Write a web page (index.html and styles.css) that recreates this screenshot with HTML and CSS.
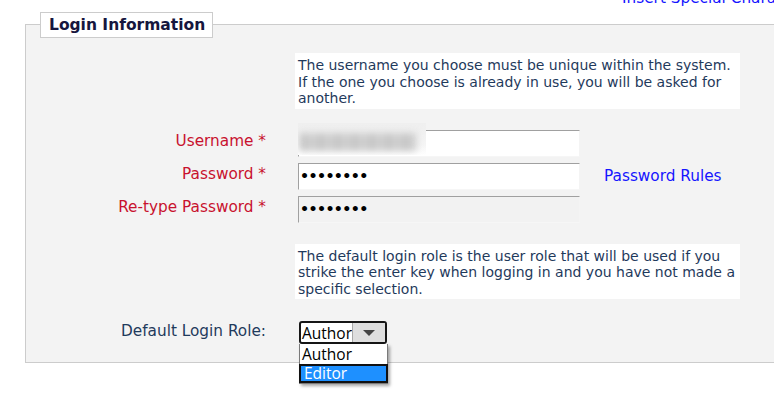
FILE: index.html
```html
<!DOCTYPE html>
<html lang="en">
<head>
<meta charset="utf-8">
<title>Login Information</title>
<link rel="stylesheet" href="styles.css">
</head>
<body>
<div class="topbar"><a class="toplink" href="#">Insert Special Characters</a></div>
<section class="login" aria-labelledby="login-title">
  <h2 class="legend" id="login-title">Login Information</h2>

  <div class="row row-info1">
    <div class="label"></div>
    <div class="info">The username you choose must be unique within the system. If the one you choose is already in use, you will be asked for another.</div>
  </div>

  <div class="row row-user">
    <div class="label req">Username <span class="star">*</span></div>
    <div class="field smudged">
      <input class="input" type="text" value="" aria-label="Username">
      <div class="smudge"><span class="ink"></span></div>
    </div>
  </div>

  <div class="row row-pass">
    <div class="label req">Password <span class="star">*</span></div>
    <div class="field"><input class="input pw" type="password" value="abcdefgh" aria-label="Password"></div>
    <a class="aside" href="#">Password Rules</a>
  </div>

  <div class="row row-pass">
    <div class="label req">Re-type Password <span class="star">*</span></div>
    <div class="field"><input class="input pw readonly" type="password" value="abcdefgh" readonly aria-label="Re-type Password"></div>
  </div>

  <div class="row row-info2">
    <div class="label"></div>
    <div class="info">The default login role is the user role that will be used if you strike the enter key when logging in and you have not made a specific selection.</div>
  </div>

  <div class="row row-role">
    <div class="label role">Default Login Role:</div>
    <div class="field">
      <div class="selectwrap">
        <div class="select">
          <span class="select-value">Author</span>
          <span class="select-btn"><svg width="12" height="6" viewBox="0 0 12 6"><path d="M0 0h12L6 6z" fill="#444"/></svg></span>
        </div>
        <ul class="listbox">
          <li class="opt">Author</li>
          <li class="opt selected">Editor</li>
        </ul>
      </div>
    </div>
  </div>
</section>
<div class="pagefoot"></div>
</body>
</html>
```
FILE: styles.css
```css
html {
  overflow: hidden;
  background: #ffffff;
}
body {
  margin: 0;
  padding: 0;
  font-family: "DejaVu Sans", Verdana, sans-serif;
  font-size: 14px;
  color: #1f3a5c;
}
.topbar {
  height: 16px;
  margin-top: -10px;
  padding-left: 622px;
  white-space: nowrap;
  line-height: 16px;
}
.toplink {
  color: #1515ff;
  text-decoration: none;
  font-size: 15.3px;
}
.login {
  margin: 18px 0 0 25px;
  width: 800px;
  padding: 0 0 18px 0;
  border: 1px solid #cccccc;
  background: #f3f3f3;
  box-sizing: border-box;
}
.pagefoot {
  height: 40px;
}
.legend {
  width: fit-content;
  margin: -13px 0 0 14px;
  padding: 1px 7px 0 8px;
  border: 1px solid #cccccc;
  background: #ffffff;
  font-weight: bold;
  font-size: 15.5px;
  line-height: 23px;
  color: #16163e;
}
.row {
  display: flex;
  align-items: flex-start;
}
.row-info1 { margin-top: 15px; }
.row-user { margin-top: 21px; }
.row-pass { margin-top: 6px; }
.row-info2 { margin-top: 21px; }
.row-role { margin-top: 22px; }
.label {
  width: 240px;
  flex: none;
  margin-right: 32px;
  text-align: right;
  font-size: 15.3px;
  line-height: 20px;
  padding-top: 1px;
}
.label.req { color: #c8112e; }
.label.role { padding-top: 0; color: #1f3a5c; }
.info {
  margin-left: -3px;
  width: 445px;
  box-sizing: border-box;
  padding: 4px 3px 2px 3px;
  background: #ffffff;
  line-height: 16.5px;
  font-size: 14px;
  color: #1f3a5c;
}
.field {
  width: 282px;
  flex: none;
}
.smudged { position: relative; }
.input {
  display: block;
  width: 282px;
  height: 27px;
  box-sizing: border-box;
  margin: 0;
  padding: 0 0 0 1px;
  border: 1px solid;
  border-color: #a0a0a0 #f4f4f4 #f6f6f6 #a0a0a0;
  background: #ffffff;
  font-family: "DejaVu Sans", sans-serif;
  font-size: 14.2px;
  color: #000000;
  outline: none;
}
.pw {
  font-weight: bold;
  letter-spacing: -0.6px;
}
.readonly { background: #f2f2f2; }
.smudge {
  position: absolute;
  left: 0;
  top: -7px;
  width: 128px;
  height: 32px;
  background: linear-gradient(to bottom, #efefef 0, #f0f0f0 7px, #f5f5f5 22px, #ffffff 32px);
  overflow: hidden;
}
.ink {
  position: absolute;
  left: 2px;
  top: 10px;
  width: 116px;
  height: 18px;
  background: repeating-linear-gradient(90deg, #c2c2c2 0 7px, #d8d8d8 7px 10px, #c8c8c8 10px 15px, #e0e0e0 15px 17px);
  filter: blur(3.5px);
}
.aside {
  margin-left: 24px;
  font-size: 15.3px;
  line-height: 20px;
  padding-top: 3px;
  color: #1515ff;
  text-decoration: none;
}
.selectwrap {
  position: relative;
  margin-left: 1px;
  width: 88px;
}
.select {
  display: flex;
  height: 23px;
  box-sizing: border-box;
  border: 2px solid #161616;
  border-radius: 3px;
  background: #ffffff;
  overflow: hidden;
  font-family: "Open Sans", "Liberation Sans", sans-serif;
  font-size: 15.5px;
  line-height: 21px;
  color: #000000;
}
.select-value {
  flex: 1;
  padding-left: 1px;
}
.select-btn {
  width: 32px;
  flex: none;
  display: flex;
  align-items: center;
  justify-content: center;
  background: #dedede;
  border-left: 1px solid #a8a8a8;
}
.listbox {
  position: absolute;
  z-index: 2;
  left: 0;
  top: 23px;
  width: 89px;
  margin: 0;
  padding: 0;
  list-style: none;
  box-sizing: border-box;
  background: #ffffff;
  border: 1px solid #7a7a7a;
  border-top: none;
  box-shadow: 2px 2px 3px rgba(0, 0, 0, 0.35);
  font-family: "Open Sans", "Liberation Sans", sans-serif;
  font-size: 15.5px;
  color: #000000;
}
.opt {
  height: 20px;
  line-height: 21px;
  padding-left: 2px;
}
.opt.selected {
  height: 19px;
  line-height: 15px;
  box-sizing: border-box;
  margin-left: -1px;
  margin-right: -1px;
  padding-left: 3px;
  border: 2px solid #111111;
  background: #1e90ff;
  color: #ffffff;
}
```
